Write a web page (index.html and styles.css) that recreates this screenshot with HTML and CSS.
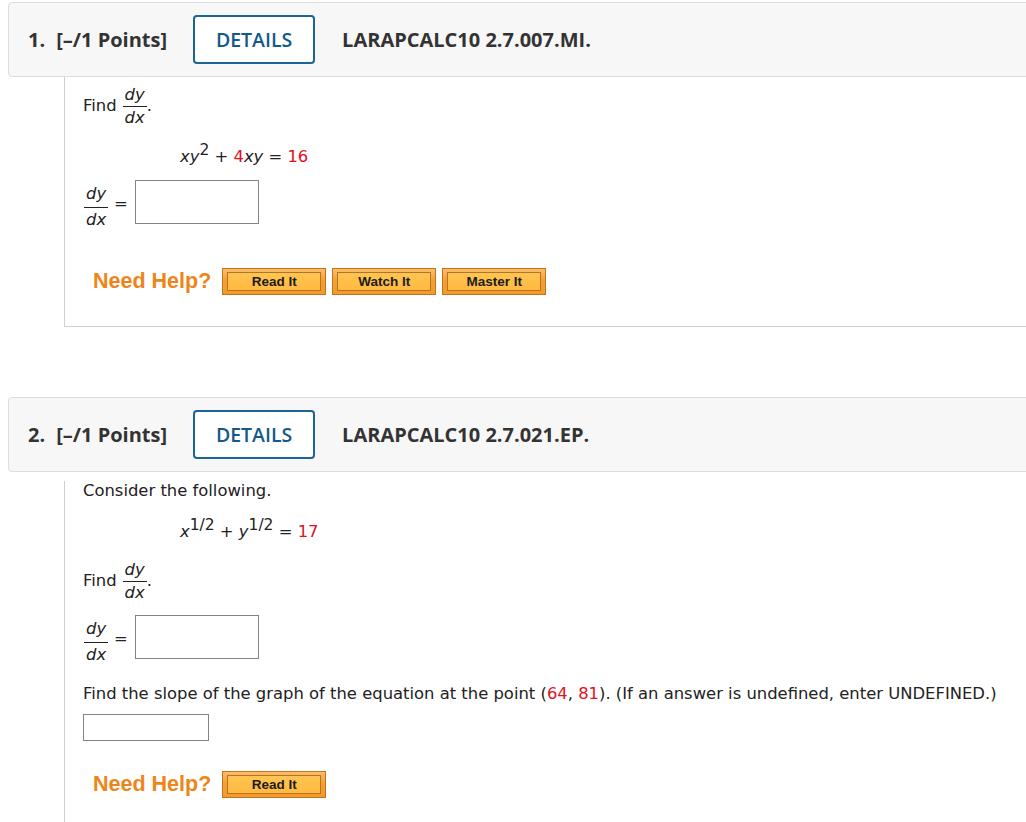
FILE: index.html
```html
<!DOCTYPE html>
<html>
<head>
<meta charset="utf-8">
<link rel="stylesheet" href="styles.css">
</head>
<body>
<div class="page">
  <section class="question q1">
    <header class="qhead">
      <span class="qnum">1.</span>
      <span class="qpts">[–/1 Points]</span>
      <button class="details">DETAILS</button>
      <span class="qcode">LARAPCALC10 2.7.007.MI.</span>
    </header>
    <div class="qbody">
      <div class="line find">Find <span class="frac"><span class="num">dy</span><span class="den">dx</span></span>.</div>
      <div class="eq eq1"><i>xy</i><sup>2</sup> + <span class="red">4</span><i>xy</i> = <span class="red">16</span></div>
      <div class="answer-row">
        <span class="frac big"><span class="num">dy</span><span class="den">dx</span></span>
        <span class="equals">=</span>
        <span class="inbox"></span>
      </div>
      <div class="help help1">
        <span class="need">Need Help?</span>
        <span class="btn"><span>Read It</span></span>
        <span class="btn"><span>Watch It</span></span>
        <span class="btn"><span>Master It</span></span>
      </div>
    </div>
  </section>

  <section class="question q2">
    <header class="qhead">
      <span class="qnum">2.</span>
      <span class="qpts">[–/1 Points]</span>
      <button class="details">DETAILS</button>
      <span class="qcode">LARAPCALC10 2.7.021.EP.</span>
    </header>
    <div class="qbody body2">
      <div class="line consider">Consider the following.</div>
      <div class="eq eq2"><i>x</i><sup>1/2</sup> + <i>y</i><sup>1/2</sup> = <span class="red">17</span></div>
      <div class="line find find2">Find <span class="frac"><span class="num">dy</span><span class="den">dx</span></span>.</div>
      <div class="answer-row row2">
        <span class="frac big"><span class="num">dy</span><span class="den">dx</span></span>
        <span class="equals">=</span>
        <span class="inbox"></span>
      </div>
      <div class="line slope">Find the slope of the graph of the equation at the point (<span class="red">64</span>, <span class="red">81</span>). (If an answer is undefined, enter UNDEFINED.)</div>
      <span class="inbox small"></span>
      <div class="help help2">
        <span class="need">Need Help?</span>
        <span class="btn"><span>Read It</span></span>
      </div>
    </div>
  </section>
</div>
</body>
</html>
```
FILE: styles.css
```css
html, body {
  margin: 0;
  padding: 0;
  overflow: hidden;
  background: #ffffff;
}
.page {
  padding: 2px 0 0 8px;
  width: 1040px;
  font-family: "DejaVu Sans", Verdana, sans-serif;
  font-size: 16.4px;
  color: #222;
}
.qhead {
  height: 73px;
  border: 1px solid #dcdcdc;
  border-radius: 4px 0 0 4px;
  background: #f7f7f7;
  display: flex;
  align-items: center;
  padding-left: 19px;
  font-family: "Open Sans", sans-serif;
  font-weight: 700;
  font-size: 20px;
  color: #333;
}
.qpts {
  margin-left: 11px;
}
.details {
  margin-left: 26px;
  width: 122px;
  height: 49px;
  border: 2px solid #1a6496;
  border-radius: 4px;
  background: #fff;
  font-family: "Open Sans", sans-serif;
  font-weight: 600;
  font-size: 19.5px;
  color: #13598a;
  padding: 0;
}
.qcode {
  margin-left: 27px;
}
.qbody {
  margin-left: 56px;
  border-left: 1px solid #cfcfcf;
  border-bottom: 1px solid #cfcfcf;
  padding-left: 18px;
  height: 250px;
  box-sizing: border-box;
}
.q2 {
  margin-top: 70px;
}
.body2 {
  border-bottom: none;
  height: 360px;
}
.line {
  line-height: 20px;
}
.frac {
  display: inline-flex;
  flex-direction: column;
  align-items: center;
  vertical-align: middle;
  font-style: italic;
  line-height: 20px;
  margin: 0 1px;
}
.frac .num {
  border-bottom: 1px solid #222;
  padding: 0 2px 1px;
}
.frac .den {
  padding-top: 1px;
}
.find {
  padding-top: 8px;
  height: 42px;
  display: flex;
  align-items: center;
}
.find .frac { margin-left: 6px; margin-right: 0; }
.eq {
  margin-left: 97px;
  line-height: 20px;
  color: #222;
}
.eq i { font-style: italic; }
.eq sup {
  font-size: 15.5px;
  vertical-align: 0;
  position: relative;
  top: -7px;
  line-height: 0;
}
.eq1 { margin-top: 20px; }
.red { color: #e3101d; }
.answer-row {
  display: flex;
  align-items: flex-start;
  margin-top: 13px;
}
.answer-row .frac {
  margin-left: 1px;
  margin-top: 4px;
  margin-bottom: -10px;
}
.answer-row .frac .num { padding-bottom: 3px; }
.answer-row .frac .den { padding-top: 2px; }
.equals {
  margin-left: 5px;
  margin-right: 7px;
  margin-top: 14px;
  line-height: 20px;
}
.inbox {
  display: block;
  width: 122px;
  height: 42px;
  border: 1px solid #848484;
  background: #fff;
}
.inbox.small {
  width: 124px;
  height: 25px;
  margin-top: 10px;
}
.help {
  display: flex;
  align-items: center;
  padding-left: 10px;
}
.help1 { margin-top: 44px; }
.need {
  font-family: "Liberation Sans", Arial, sans-serif;
  font-weight: 700;
  font-size: 21.5px;
  color: #ee8519;
  margin-right: 11px;
}
.btn {
  display: block;
  width: 104px;
  height: 27px;
  box-sizing: border-box;
  border: 1px solid #c5721f;
  background: linear-gradient(#fbbe6a, #f6a030 45%, #f39a2a);
  padding: 3px 4px;
  margin-right: 6px;
}
.btn span {
  display: block;
  height: 19px;
  box-sizing: border-box;
  border: 1px solid #b5722c;
  background: linear-gradient(#ffc552, #ffb940);
  text-align: center;
  font-family: "Liberation Sans", Arial, sans-serif;
  font-weight: 700;
  font-size: 13.5px;
  line-height: 17px;
  color: #1c1c1c;
}
.consider {
  margin-top: 9px;
}
.eq2 { margin-top: 21px; }
.find2 { padding-top: 18px; }
.row2 { margin-top: 13px; }
.slope { margin-top: 25px; }
.help2 { margin-top: 30px; }
```
